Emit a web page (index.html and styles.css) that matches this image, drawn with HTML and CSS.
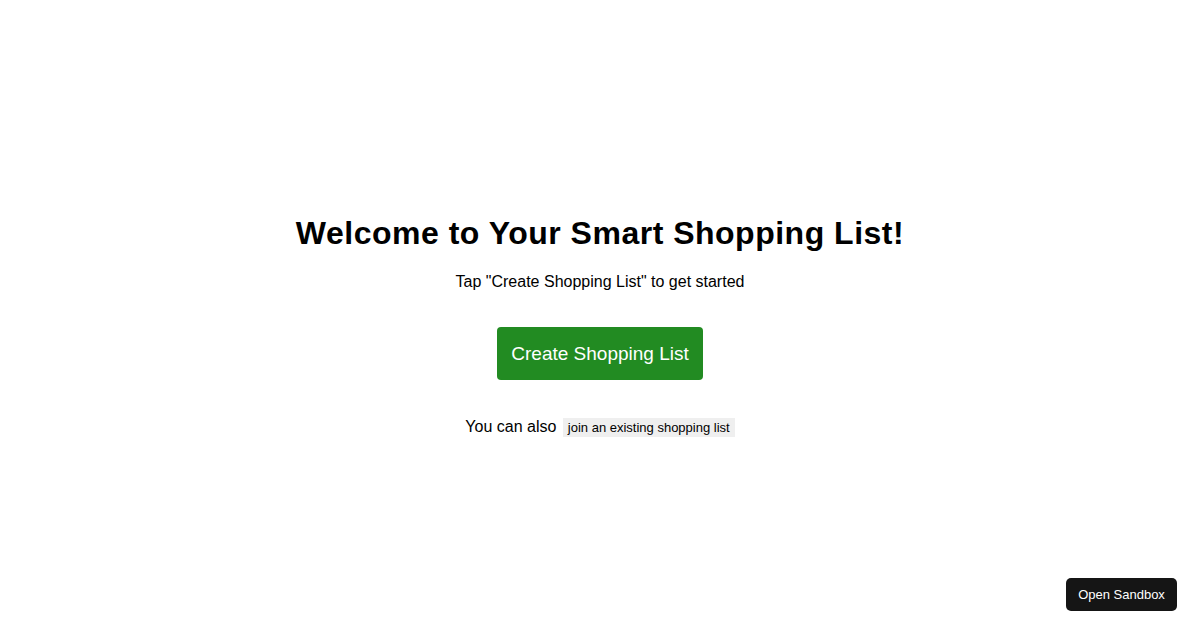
FILE: index.html
```html
<!DOCTYPE html>
<html lang="en">
<head>
<meta charset="utf-8">
<title>Smart Shopping List</title>
<link rel="stylesheet" href="styles.css">
</head>
<body>
<main class="welcome">
  <h1 class="welcome-title">Welcome to Your Smart Shopping List!</h1>
  <p class="welcome-sub">Tap "Create Shopping List" to get started</p>
  <button class="create-btn" type="button">Create Shopping List</button>
  <p class="join-line">You can also <button class="join-btn" type="button">join an existing shopping list</button></p>
</main>
<button class="sandbox-btn" type="button">Open Sandbox</button>
</body>
</html>
```
FILE: styles.css
```css
html, body {
  margin: 0;
  padding: 0;
  height: 100%;
  background: #fff;
}
body {
  font-family: "Liberation Sans", Arial, sans-serif;
  color: #000;
}
.welcome {
  display: flex;
  flex-direction: column;
  align-items: center;
  text-align: center;
  padding-top: 215px;
}
.welcome-title {
  font-size: 32px;
  font-weight: bold;
  letter-spacing: 0.5px;
  margin: 0 0 21px;
  line-height: 37px;
}
.welcome-sub {
  font-size: 16px;
  margin: 0 0 36px;
  line-height: 18px;
}
.create-btn {
  font-family: "Liberation Sans", Arial, sans-serif;
  font-size: 19px;
  color: #fff;
  background: #228b22;
  border: none;
  border-radius: 4px;
  padding: 0 14px;
  height: 53px;
  margin: 0 0 38px;
}
.join-line {
  font-size: 16px;
  margin: 0;
  line-height: 18px;
}
.join-btn {
  font-family: "Liberation Sans", Arial, sans-serif;
  font-size: 13px;
  color: #000;
  background: #efefef;
  border: none;
  padding: 2px 5px;
  margin-left: 2px;
}
.sandbox-btn {
  position: fixed;
  right: 23px;
  bottom: 19px;
  font-family: "Liberation Sans", Arial, sans-serif;
  font-size: 13px;
  color: #fff;
  background: #151515;
  border: none;
  border-radius: 5px;
  width: 111px;
  height: 33px;
}
```
